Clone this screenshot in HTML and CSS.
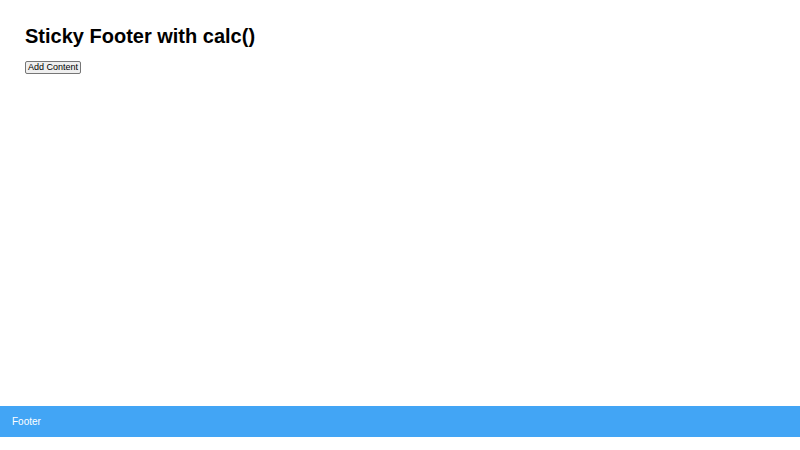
FILE: index.html
```html
<!DOCTYPE html>
<html>
<head>
<meta charset="utf-8">
<link rel="stylesheet" href="styles.css">
</head>
<body>
<div class="content">
  <h1 class="title">Sticky Footer with calc()</h1>
  <button class="add-btn">Add Content</button>
</div>
<footer class="footer">Footer</footer>
</body>
</html>
```
FILE: styles.css
```css
* { margin: 0; padding: 0; box-sizing: border-box; }
html, body { height: 100%; }
body {
  font-family: "Liberation Sans", Arial, sans-serif;
  background: #fff;
  color: #000;
}
.content {
  min-height: calc(100vh - 44px);
  padding: 25px 25px 0 25px;
}
.title {
  font-size: 20px;
  font-weight: bold;
  line-height: 23px;
  margin-bottom: 13px;
}
.add-btn {
  display: block;
  font-family: "Liberation Sans", Arial, sans-serif;
  font-size: 9px;
  padding: 1px 2px;
  height: 13px;
  line-height: 9px;
  background: #efefef;
  border: 1px solid #767676;
  border-radius: 2px;
  color: #000;
}
.footer {
  height: 31px;
  line-height: 31px;
  background: #42a5f5;
  color: #fff;
  font-size: 10px;
  padding: 0 12px;
}
```
